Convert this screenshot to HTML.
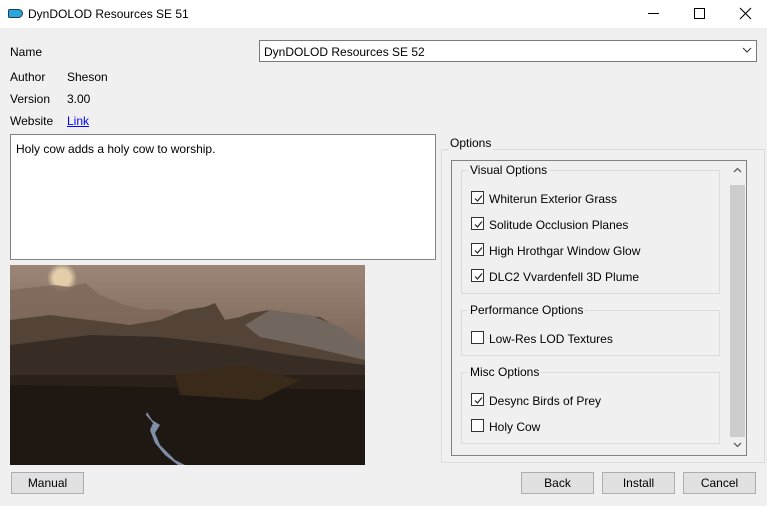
<!DOCTYPE html>
<html><head><meta charset="utf-8"><style>
*{box-sizing:border-box;margin:0;padding:0}
body{width:767px;height:506px;background:#f0f0f0;font-family:"Liberation Sans",sans-serif;font-size:12px;color:#000;position:relative;overflow:hidden}
.a{position:absolute;white-space:nowrap}
.title{left:0;top:0;width:767px;height:28px;background:#fff}
.btn{position:absolute;height:22px;border:1px solid #adadad;background:#e1e1e1;text-align:center;line-height:20px}
.grp{position:absolute;border:1px solid #dcdcdc}
.gl{position:absolute;background:#f0f0f0;padding:0 2px;line-height:13px}
.cb{position:absolute;width:13px;height:13px;border:1px solid #333;background:#fff}
.cb svg{position:absolute;left:1px;top:1px}
.lbl{position:absolute;line-height:14px}
</style></head><body>
<div class="a title"></div>
<div class="a" style="left:8px;top:9px;width:15px;height:9px;background:#2aa7d8;border:1px solid #1c3a5a;border-radius:2px 5px 5px 2px"></div>
<div class="a" style="left:28px;top:7px;font-size:12px">DynDOLOD Resources SE 51</div>
<div class="a" style="left:648px;top:13px;width:11px;height:1px;background:#000"></div>
<div class="a" style="left:694px;top:8px;width:11px;height:11px;border:1px solid #000"></div>
<svg class="a" style="left:739px;top:7px" width="13" height="13"><path d="M1 1L12 12M12 1L1 12" stroke="#000" stroke-width="1.1"/></svg>

<div class="a" style="left:10px;top:45px">Name</div>
<div class="a" style="left:259px;top:40px;width:498px;height:22px;border:1px solid #7a7a7a;background:#fff;padding:4px 0 0 4px">DynDOLOD Resources SE 52</div>
<svg class="a" style="left:742px;top:47px" width="10" height="7"><path d="M1 1L5 5L9 1" fill="none" stroke="#333"/></svg>
<div class="a" style="left:10px;top:70px">Author</div><div class="a" style="left:67px;top:70px">Sheson</div>
<div class="a" style="left:10px;top:92px">Version</div><div class="a" style="left:67px;top:92px">3.00</div>
<div class="a" style="left:10px;top:114px">Website</div><div class="a" style="left:67px;top:114px;color:#0000ff;text-decoration:underline">Link</div>

<div class="a" style="left:10px;top:134px;width:426px;height:126px;background:#fff;border:1px solid #828282;padding:7px 5px">Holy cow adds a holy cow to worship.</div>

<svg class="a" style="left:10px;top:265px" width="355" height="200" viewBox="0 0 355 200">
<defs><linearGradient id="s" x1="0" y1="0" x2="0" y2="1"><stop offset="0" stop-color="#a08a7c"/><stop offset="0.35" stop-color="#7e6a5c"/><stop offset="1" stop-color="#3a2e24"/></linearGradient>
<radialGradient id="sun"><stop offset="0.55" stop-color="#f3dfb6"/><stop offset="1" stop-color="#f3dfb6" stop-opacity="0"/></radialGradient></defs>
<rect width="355" height="200" fill="url(#s)"/>
<circle cx="52" cy="13" r="15" fill="url(#sun)"/>
<path d="M0 25L25 22L45 20L60 22L75 18L90 30L115 40L135 45L150 44L165 46L170 65L0 60Z" fill="#7a6557" opacity="0.8"/>
<path d="M0 55L40 50L80 55L120 60L150 55L175 45L195 42L205 38L215 55L230 52L240 48L260 45L280 50L310 52L340 70L355 80L355 200L0 200Z" fill="#4a3c30"/>
<path d="M235 60L260 45L300 50L330 62L355 80L355 95L300 82L250 72Z" fill="#6e665f"/>
<path d="M0 80L80 70L150 72L220 80L280 90L355 100L355 200L0 200Z" fill="#2a2119"/>
<path d="M0 120L355 125L355 200L0 200Z" fill="#1f1812"/>
<rect width="355" height="110" fill="#8a7462" opacity="0.15"/>
<path d="M165 110L230 100L290 115L250 135L170 130Z" fill="#3a2a1a"/>
<path d="M137 147L142 155L150 160L145 168L150 180L165 195L175 200L168 200L155 190L145 178L140 165L143 158L136 150Z" fill="#7f8ea8"/>
</svg>

<div class="grp" style="left:441px;top:149px;width:324px;height:314px"></div>
<div class="gl" style="left:448px;top:137px">Options</div>
<div class="a" style="left:451px;top:160px;width:296px;height:296px;border:1px solid #828282"></div>
<div class="a" style="left:729px;top:161px;width:17px;height:294px;background:#f0f0f0"></div>
<div class="a" style="left:730px;top:185px;width:15px;height:252px;background:#cdcdcd"></div>
<svg class="a" style="left:733px;top:167px" width="9" height="6"><path d="M1 5L4.5 1.5L8 5" fill="none" stroke="#606060" stroke-width="1.3"/></svg>
<svg class="a" style="left:733px;top:442px" width="9" height="6"><path d="M1 1L4.5 4.5L8 1" fill="none" stroke="#606060" stroke-width="1.3"/></svg>

<div class="grp" style="left:461px;top:170px;width:259px;height:124px"></div>
<div class="gl" style="left:468px;top:164px">Visual Options</div>
<div class="grp" style="left:461px;top:310px;width:259px;height:46px"></div>
<div class="gl" style="left:468px;top:304px">Performance Options</div>
<div class="grp" style="left:461px;top:372px;width:259px;height:72px"></div>
<div class="gl" style="left:468px;top:366px">Misc Options</div>

<div class="cb" style="left:471px;top:191px"><svg width="11" height="11"><path d="M2 5.5L4.5 8L9 2.5" fill="none" stroke="#222" stroke-width="1.2"/></svg></div><div class="lbl" style="left:489px;top:192px">Whiterun Exterior Grass</div>
<div class="cb" style="left:471px;top:217px"><svg width="11" height="11"><path d="M2 5.5L4.5 8L9 2.5" fill="none" stroke="#222" stroke-width="1.2"/></svg></div><div class="lbl" style="left:489px;top:218px">Solitude Occlusion Planes</div>
<div class="cb" style="left:471px;top:243px"><svg width="11" height="11"><path d="M2 5.5L4.5 8L9 2.5" fill="none" stroke="#222" stroke-width="1.2"/></svg></div><div class="lbl" style="left:489px;top:244px">High Hrothgar Window Glow</div>
<div class="cb" style="left:471px;top:269px"><svg width="11" height="11"><path d="M2 5.5L4.5 8L9 2.5" fill="none" stroke="#222" stroke-width="1.2"/></svg></div><div class="lbl" style="left:489px;top:270px">DLC2 Vvardenfell 3D Plume</div>
<div class="cb" style="left:471px;top:331px"></div><div class="lbl" style="left:489px;top:332px">Low-Res LOD Textures</div>
<div class="cb" style="left:471px;top:393px"><svg width="11" height="11"><path d="M2 5.5L4.5 8L9 2.5" fill="none" stroke="#222" stroke-width="1.2"/></svg></div><div class="lbl" style="left:489px;top:394px">Desync Birds of Prey</div>
<div class="cb" style="left:471px;top:419px"></div><div class="lbl" style="left:489px;top:420px">Holy Cow</div>

<div class="btn" style="left:11px;top:472px;width:73px">Manual</div>
<div class="btn" style="left:521px;top:472px;width:73px">Back</div>
<div class="btn" style="left:602px;top:472px;width:73px">Install</div>
<div class="btn" style="left:683px;top:472px;width:73px">Cancel</div>
</body></html>
